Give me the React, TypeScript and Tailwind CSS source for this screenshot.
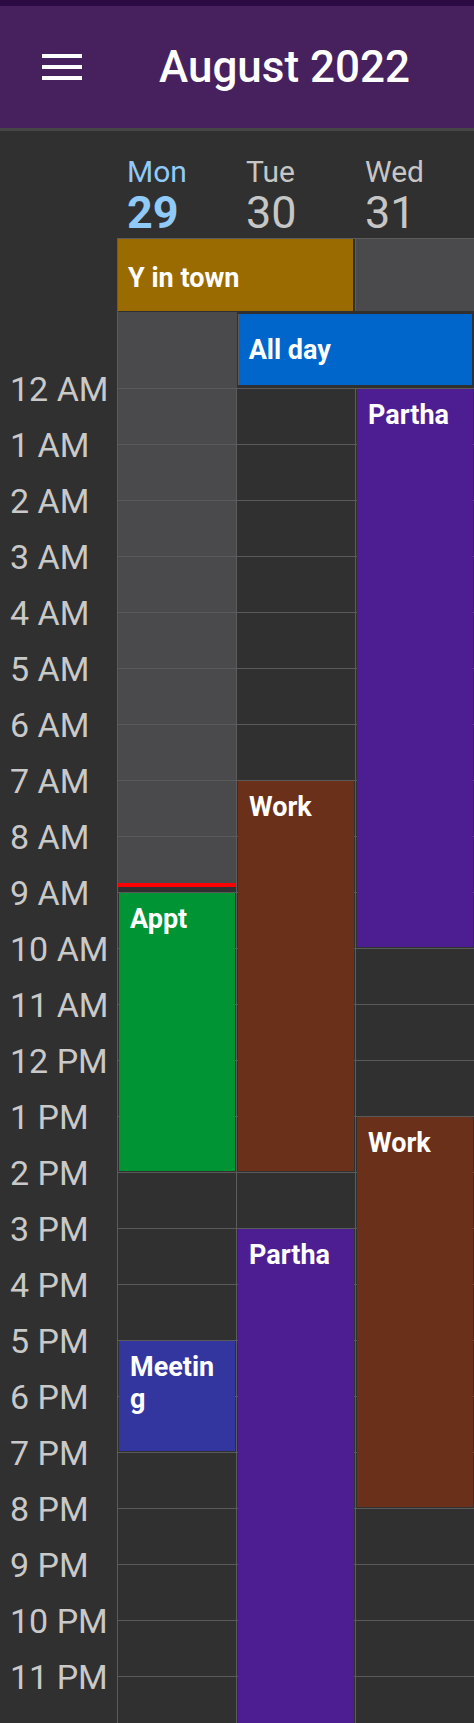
import React from 'react';

type CalEvent = { title: string; start: number; end: number; bg: string };

const HOUR = 56;
const HOURS = Array.from({ length: 24 }, (_, i) => i);

const hourLabel = (h: number) => {
  if (h === 0) return '12 AM';
  if (h < 12) return `${h} AM`;
  if (h === 12) return '12 PM';
  return `${h - 12} PM`;
};

const DAYS = [
  { name: 'Mon', num: '29', today: true },
  { name: 'Tue', num: '30', today: false },
  { name: 'Wed', num: '31', today: false },
];

const EVENTS: CalEvent[][] = [
  [
    { title: 'Appt', start: 9, end: 14, bg: 'bg-[#009435]' },
    { title: 'Meeting', start: 17, end: 19, bg: 'bg-[#3436a0]' },
  ],
  [
    { title: 'Work', start: 7, end: 14, bg: 'bg-[#6b3019]' },
    { title: 'Partha', start: 15, end: 24, bg: 'bg-[#4d1e92]' },
  ],
  [
    { title: 'Partha', start: 0, end: 10, bg: 'bg-[#4d1e92]' },
    { title: 'Work', start: 13, end: 20, bg: 'bg-[#6b3019]' },
  ],
];

// Monday is shaded up to "now" (8:50-ish), red line marks the current time
const PAST_HOURS = 8;

const EventBlock: React.FC<{ ev: CalEvent }> = ({ ev }) => (
  <div
    className={`absolute left-[1px] right-[1px] ${ev.bg} pl-[11px] pr-[10px] pt-[10px] text-[27px] font-bold leading-[32px] text-white break-all overflow-hidden`}
    style={{ top: ev.start * HOUR + 1, height: (ev.end - ev.start) * HOUR - 2 }}
  >
    {ev.title}
  </div>
);

const DayColumn: React.FC<{ index: number }> = ({ index }) => (
  <div className="relative border-l border-[#5c5c5c]">
    {HOURS.map((h) => {
      const past = index === 0 && h < PAST_HOURS;
      const nowCell = index === 0 && h === PAST_HOURS;
      return (
        <div
          key={h}
          className={`h-[56px] border-t border-[#5a5a5a] ${past ? 'bg-[#4a494c]' : ''}`}
        >
          {nowCell && (
            <>
              <div className="h-[46px] bg-[#4a494c]" />
              <div className="h-[4px] bg-[#ff0000]" />
            </>
          )}
        </div>
      );
    })}
    {EVENTS[index].map((ev) => (
      <EventBlock key={ev.title + ev.start} ev={ev} />
    ))}
  </div>
);

export default function App() {
  return (
    <div className="w-[474px] h-[1723px] overflow-hidden bg-[#303030] font-['Roboto',sans-serif]">
      {/* Status strip + app bar */}
      <div className="h-[6px] bg-[#2c0b45]" />
      <header className="h-[122px] bg-[#47205e] flex items-center">
        <div className="ml-[42px] flex flex-col gap-[7px]">
          <span className="block w-[40px] h-[4px] bg-white" />
          <span className="block w-[40px] h-[4px] bg-white" />
          <span className="block w-[40px] h-[4px] bg-white" />
        </div>
        <h1 className="ml-[77px] text-[44px] font-medium leading-none text-white">August 2022</h1>
      </header>
      <div className="h-[3px] bg-[#464646]" />

      {/* Day headers */}
      <div className="h-[107px] flex pl-[117px]">
        {DAYS.map((d) => (
          <div key={d.name} className="flex-1 pl-[10px] pt-[26px]">
            <div className={`text-[30px] leading-[30px] ${d.today ? 'text-[#90caf9]' : 'text-[#c6c6c6]'}`}>{d.name}</div>
            <div
              className={`mt-[6px] text-[45px] leading-[40px] ${d.today ? 'font-bold text-[#90caf9]' : 'text-[#c6c6c6]'}`}
            >
              {d.num}
            </div>
          </div>
        ))}
      </div>

      {/* Body */}
      <div className="flex">
        {/* Hour gutter */}
        <div className="w-[117px] shrink-0">
          <div className="h-[149px]" />
          <div className="-mt-[26px]">
            {HOURS.map((h) => (
              <div key={h} className="h-[56px] flex items-center pl-[10px] text-[34px] leading-none text-[#c9c9c9] whitespace-nowrap">
                {hourLabel(h)}
              </div>
            ))}
          </div>
        </div>

        <div className="flex-1">
          {/* All-day rows */}
          <div className="grid grid-cols-3 grid-rows-[72px_77px] border-t border-l border-[#5c5c5c]">
            <div className="col-span-2 mr-[2px] bg-[#9a6b00] flex items-center pl-[10px] pt-[6px] text-[27px] font-bold text-white">
              Y in town
            </div>
            <div className="border-l border-[#5c5c5c] bg-[#4a494c]" />
            <div className="mt-[1px] bg-[#4a494c]" />
            <div className="col-span-2 border-l border-[#5c5c5c] my-[3px] ml-[1px] mr-[2px] bg-[#0066cc] flex items-center pl-[10px] pt-[2px] text-[27px] font-bold text-white">
              All day
            </div>
          </div>

          {/* Timed grid */}
          <div className="grid grid-cols-3">
            {DAYS.map((d, i) => (
              <DayColumn key={d.name} index={i} />
            ))}
          </div>
        </div>
      </div>
    </div>
  );
}
